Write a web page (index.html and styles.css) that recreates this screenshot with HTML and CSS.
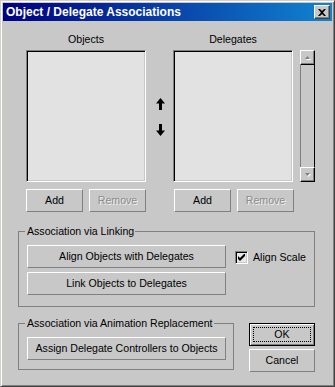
FILE: index.html
```html
<!DOCTYPE html>
<html>
	<head>
	<meta charset="utf-8">
	<link rel="stylesheet" href="styles.css">
	</head>

	<body>
		<div class="window">

			<div class="titlebar">
				<span class="title">Object / Delegate Associations</span>
				<span class="close">
					<svg width="8" height="7" viewBox="0 0 8 7">
						<path d="M0 0h2l2 2 2-2h2L5 3.5 8 7H6L4 5 2 7H0l3-3.5z" fill="#000"/>
					</svg>
				</span>
			</div>

			<div class="content">

				<div class="lists">
					<div class="list-label">Objects</div>
					<div class="list-label label-delegates">Delegates</div>

					<div class="listbox"></div>

					<div class="arrows">
						<svg width="9" height="12" viewBox="0 0 9 12">
							<path d="M4.5 0L9 5.5H6V12H3V5.5H0z" fill="#000"/>
						</svg>
						<svg width="9" height="12" viewBox="0 0 9 12">
							<path d="M4.5 12L9 6.5H6V0H3V6.5H0z" fill="#000"/>
						</svg>
					</div>

					<div class="listbox listbox-delegates"></div>

					<div class="scrollbar">
						<span class="scroll-btn">
							<svg width="5" height="3" viewBox="0 0 5 3"><path d="M2.5 0L5 3H0z" fill="#808080"/></svg>
						</span>
						<span class="scroll-track"></span>
						<span class="scroll-btn">
							<svg width="5" height="3" viewBox="0 0 5 3"><path d="M2.5 3L5 0H0z" fill="#808080"/></svg>
						</span>
					</div>

					<div class="btn-row">
						<button class="btn small">Add</button>
						<button class="btn small" disabled>Remove</button>
					</div>
					<div class="btn-row row-delegates">
						<button class="btn small">Add</button>
						<button class="btn small" disabled>Remove</button>
					</div>
				</div>

				<fieldset class="group group-linking">
					<legend>Association via Linking</legend>
					<div class="linking-row">
						<div class="btn-stack">
							<button class="btn wide">Align Objects with Delegates</button>
							<button class="btn wide">Link Objects to Delegates</button>
						</div>
						<label class="check">
							<span class="check-box">
								<svg width="7" height="7" viewBox="0 0 7 7">
									<path d="M0 2v3l2 2 5-5V-1L2 4z" fill="#000"/>
								</svg>
							</span>
							Align Scale
						</label>
					</div>
				</fieldset>

				<div class="bottom-row">
					<fieldset class="group group-anim">
						<legend>Association via Animation Replacement</legend>
						<button class="btn wide">Assign Delegate Controllers to Objects</button>
					</fieldset>
					<div class="dialog-btns">
						<button class="btn dlg default"><span class="focus">OK</span></button>
						<button class="btn dlg">Cancel</button>
					</div>
				</div>

			</div>
		</div>
	</body>
</html>
```

FILE: styles.css
```css
body, html {
	margin: 0;
	padding: 0;
	background: #c8c8c8;
}

body {
	font-family: "Liberation Sans", Arial, sans-serif;
	font-size: 10.6px;
	line-height: 13px;
	color: #000;
}

.window {
	width: 335px;
	height: 387px;
	box-sizing: border-box;
	background: #c8c8c8;
	border: 1px solid;
	border-color: #d4d0c8 #404040 #404040 #d4d0c8;
	box-shadow: inset 1px 1px #fff, inset -1px -1px #808080;
	padding: 2px;
}

.titlebar {
	height: 18px;
	display: flex;
	align-items: center;
	justify-content: space-between;
	padding: 0 2px 0 3px;
	background: linear-gradient(to right, #000080, #1084d0);
}

.title {
	color: #fff;
	font-weight: bold;
	font-size: 12px;
}

.close {
	width: 16px;
	height: 14px;
	box-sizing: border-box;
	display: flex;
	align-items: center;
	justify-content: center;
	background: #c8c8c8;
	border: 1px solid;
	border-color: #fff #404040 #404040 #fff;
	box-shadow: inset -1px -1px #808080;
}

.content {
	padding: 12px 0 0 15px;
}

/* list section */
.lists {
	margin-left: 8px;
	display: grid;
	grid-template-columns: 120px 27px 120px 7px 15px;
}

.list-label {
	grid-row: 1;
	grid-column: 1;
	text-align: center;
	height: 13px;
}

.label-delegates {
	grid-column: 3;
}

.listbox {
	grid-row: 2;
	grid-column: 1;
	margin-top: 4px;
	height: 132px;
	box-sizing: border-box;
	background: #e2e2e2;
	border: 1px solid;
	border-color: #808080 #fff #fff #808080;
	box-shadow: inset 1px 1px #000, inset -1px -1px #c8c8c8;
}

.listbox-delegates {
	grid-column: 3;
}

.arrows {
	grid-row: 2;
	grid-column: 2;
	margin-top: 4px;
	height: 132px;
	box-sizing: border-box;
	display: flex;
	flex-direction: column;
	align-items: center;
	justify-content: center;
	gap: 14px;
	padding-left: 1px;
	padding-top: 2px;
}

.arrows svg {
	display: block;
}

.scrollbar {
	grid-row: 2;
	grid-column: 5;
	margin-top: 4px;
	height: 132px;
	display: flex;
	flex-direction: column;
}

.scroll-btn {
	width: 15px;
	height: 15px;
	box-sizing: border-box;
	display: flex;
	align-items: center;
	justify-content: center;
	border: 1px solid;
	border-color: #fff #000 #000 #fff;
	box-shadow: inset -1px -1px #808080;
	background: #c8c8c8;
}

.scroll-btn svg {
	filter: drop-shadow(1px 1px 0 #fff);
}

.scroll-track {
	flex: 1;
	box-sizing: border-box;
	border-left: 1px solid #808080;
	border-right: 1px solid #000;
	background: #c8c8c8;
}

.btn-row {
	grid-row: 3;
	grid-column: 1;
	margin-top: 7px;
	display: flex;
	gap: 6px;
}

.row-delegates {
	grid-column: 3 / span 3;
	margin-left: 1px;
}

/* buttons */
.btn {
	font-family: inherit;
	font-size: 10.6px;
	line-height: 13px;
	color: #000;
	background: #c8c8c8;
	border: 1px solid;
	border-color: #fff #808080 #808080 #fff;
	padding: 0;
	margin: 0;
	height: 23px;
	box-sizing: border-box;
	display: flex;
	align-items: center;
	justify-content: center;
}

.btn:disabled {
	color: #8c8c8c;
	text-shadow: 1px 1px 0 #f0f0f0;
}

.small {
	width: 57px;
}

.wide {
	width: 199px;
}

.dlg {
	width: 66px;
}

.default {
	border-color: #000;
	box-shadow: inset 1px 1px #fff, inset -1px -1px #808080;
}

.focus {
	display: flex;
	align-items: center;
	justify-content: center;
	width: 58px;
	height: 15px;
	box-sizing: border-box;
	border: 1px dotted #000;
}

/* groups */
.group {
	margin: 0;
	padding: 7px 0 11px 8px;
	border: 1px solid #808080;
	min-width: 0;
	box-sizing: border-box;
}

.group legend {
	margin-left: -2px;
	padding: 0 1px 0 2px;
	line-height: 13px;
}

.group-linking {
	width: 297px;
	margin-top: 13px;
}

.linking-row {
	display: flex;
	align-items: flex-start;
}

.btn-stack {
	display: flex;
	flex-direction: column;
	gap: 4px;
}

.check {
	display: flex;
	align-items: center;
	margin-left: 9px;
	margin-top: 6px;
	gap: 5px;
}

.check-box {
	width: 13px;
	height: 13px;
	box-sizing: border-box;
	display: flex;
	align-items: center;
	justify-content: center;
	background: #e8e8e8;
	border: 1px solid;
	border-color: #808080 #fff #fff #808080;
	box-shadow: inset 1px 1px #000, inset -1px -1px #c8c8c8;
}

.bottom-row {
	display: flex;
	align-items: flex-start;
	margin-top: 10px;
}

.group-anim {
	width: 216px;
	padding-bottom: 9px;
}

.dialog-btns {
	margin-left: 15px;
	margin-top: 6px;
	display: flex;
	flex-direction: column;
	gap: 3px;
}
```
